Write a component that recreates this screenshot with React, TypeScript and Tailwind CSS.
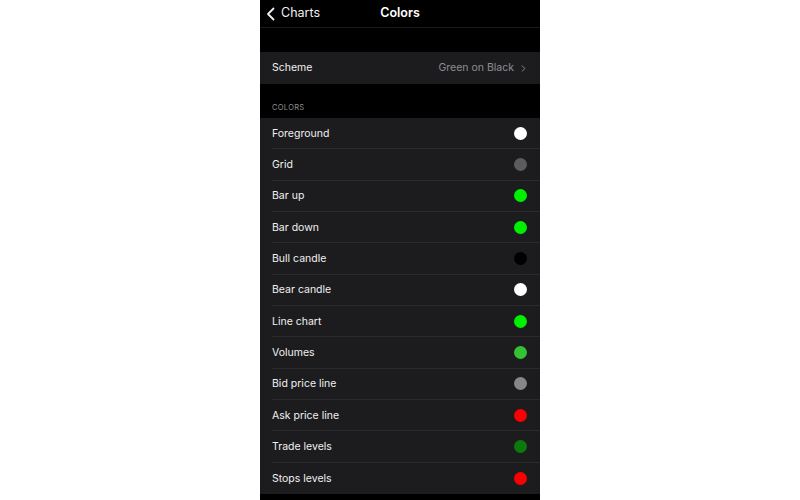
import { ChevronRight } from 'lucide-react'

const colors = [
  { label: 'Foreground', color: '#ffffff' },
  { label: 'Grid', color: '#5c5c5e' },
  { label: 'Bar up', color: '#00f000' },
  { label: 'Bar down', color: '#00f000' },
  { label: 'Bull candle', color: '#000000' },
  { label: 'Bear candle', color: '#ffffff' },
  { label: 'Line chart', color: '#00f000' },
  { label: 'Volumes', color: '#33c233' },
  { label: 'Bid price line', color: '#86868b' },
  { label: 'Ask price line', color: '#fa0000' },
  { label: 'Trade levels', color: '#0a7a0a' },
  { label: 'Stops levels', color: '#fa0000' },
]

export default function App() {
  return (
    <div className="flex h-[500px] w-full justify-center bg-white font-['Inter',sans-serif]">
      <div className="flex w-[280px] flex-col bg-black text-[#f0f0f0]">
        {/* nav bar */}
        <div className="relative flex h-[28px] items-center border-b border-[#1a1a1a]">
          <div className="flex items-center pl-[6px] text-[12.5px]">
            <svg width="10" height="14" viewBox="0 0 10 14" fill="none" stroke="currentColor" strokeWidth="1.8" strokeLinecap="round" strokeLinejoin="round">
              <path d="M7.5 1.5 2 7l5.5 5.5" />
            </svg>
            <span className="ml-[5px]">Charts</span>
          </div>
          <div className="pointer-events-none absolute inset-x-0 text-center text-[12.5px] font-semibold text-white">Colors</div>
        </div>

        <div className="h-[24px]" />

        {/* scheme */}
        <div className="flex h-[32px] items-center justify-between bg-[#1c1c1e] pl-[12px] pr-[11px] text-[10.5px]">
          <span>Scheme</span>
          <span className="flex items-center text-[#8e8e93]">
            Green on Black
            <ChevronRight className="ml-[4px] h-[11px] w-[11px]" strokeWidth={2} />
          </span>
        </div>

        <div className="flex h-[34px] items-end pb-[5px] pl-[12px] text-[7.5px] tracking-[0.04em] text-[#8e8e93]">
          COLORS
        </div>

        {/* colour list */}
        <div className="bg-[#1c1c1e]">
          {colors.map((c, i) => (
            <div key={c.label} className="pl-[12px]">
              <div
                className={`flex h-[31.33px] items-center justify-between pr-[13px] text-[10.5px] ${
                  i < colors.length - 1 ? 'border-b border-[#2a2a2c]' : ''
                }`}
              >
                <span className="pt-[1px]">{c.label}</span>
                <span className="h-[13px] w-[13px] rounded-full" style={{ backgroundColor: c.color }} />
              </div>
            </div>
          ))}
        </div>
      </div>
    </div>
  )
}
